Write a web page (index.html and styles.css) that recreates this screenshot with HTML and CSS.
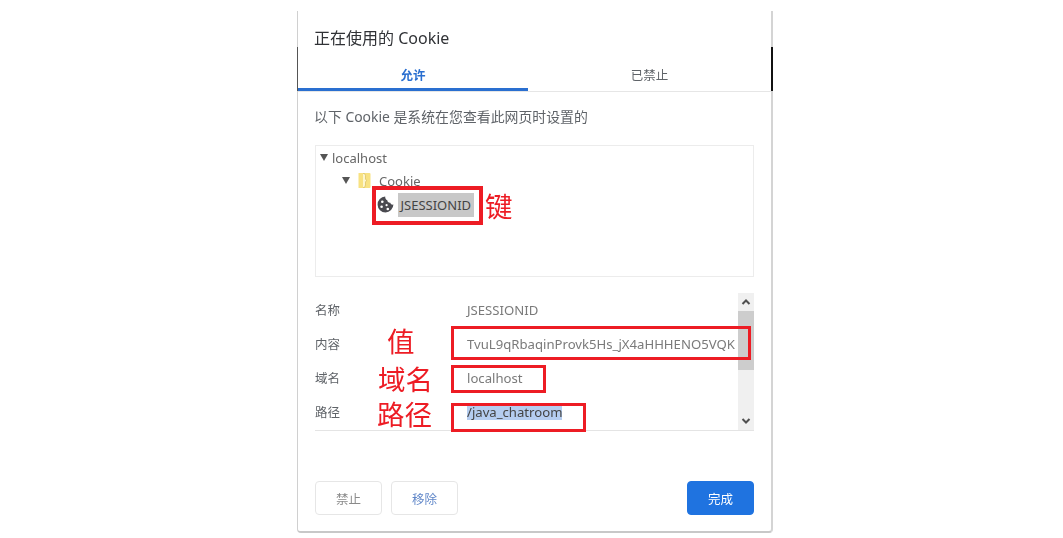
FILE: index.html
```html
<!DOCTYPE html>
<html lang="zh-CN">
<head>
    <meta charset="UTF-8">
    <title>正在使用的 Cookie</title>
    <link rel="stylesheet" href="styles.css">
</head>
<body>
    <div class="dialog">
        <div class="dialog-title">正在使用的 Cookie</div>
        <div class="tabs">
            <div class="tab active">允许</div>
            <div class="tab">已禁止</div>
        </div>
        <div class="dialog-body">
            <p class="desc">以下 Cookie 是系统在您查看此网页时设置的</p>
            <div class="tree">
                <div class="tree-row">
                    <span class="arrow"></span>
                    <span>localhost</span>
                </div>
                <div class="tree-row level-1">
                    <span class="arrow"></span>
                    <svg class="folder" width="14" height="17" viewBox="0 0 14 17">
                        <path d="M.5 1h11a1 1 0 0 1 1 1v13a1 1 0 0 1-1 1h-11z" fill="#f8e282"/>
                        <path d="M5 1.500h1.500l1 2v3.500l1 1.500-1 1.500v3l-1 2.500h-1.500" fill="#fdf6cf" stroke="#d9bf62" stroke-width="0.700"/>
                    </svg>
                    <span>Cookie</span>
                </div>
                <div class="tree-row level-2">
                    <svg class="cookie" width="17" height="17" viewBox="0 0 17 17">
                        <path d="M8.200.6a7.900 7.900 0 1 0 8.200 8c-1.500.3-2.800-.5-3.100-1.900-1.600.2-3-.9-3-2.500C8.900 4 8 2.300 8.200.6z" fill="#4a4a50"/>
                        <circle cx="5.300" cy="5.800" r="1.300" fill="#fff"/>
                        <circle cx="4.600" cy="10.800" r="1.300" fill="#fff"/>
                        <circle cx="9.600" cy="9.200" r="1.100" fill="#fff"/>
                        <circle cx="10.800" cy="13" r="1.300" fill="#fff"/>
                    </svg>
                    <span class="selected-node">JSESSIONID</span>
                </div>
            </div>
            <div class="details">
                <div class="detail-rows">
                    <div class="detail-row"><span class="detail-label">名称</span><span>JSESSIONID</span></div>
                    <div class="detail-row"><span class="detail-label">内容</span><span>TvuL9qRbaqinProvk5Hs_jX4aHHHENO5VQK</span></div>
                    <div class="detail-row"><span class="detail-label">域名</span><span>localhost</span></div>
                    <div class="detail-row"><span class="detail-label">路径</span><span class="selected-text">/java_chatroom</span></div>
                </div>
                <div class="scrollbar">
                    <svg width="16" height="18" viewBox="0 0 16 18"><path d="M4.500 11l3.500-3.500 3.500 3.500" fill="none" stroke="#505050" stroke-width="2"/></svg>
                    <div class="scroll-track"><div class="scroll-thumb"></div></div>
                    <svg width="16" height="18" viewBox="0 0 16 18"><path d="M4.500 7l3.500 3.500 3.500-3.500" fill="none" stroke="#505050" stroke-width="2"/></svg>
                </div>
            </div>
        </div>
        <div class="dialog-footer">
            <button class="btn">禁止</button>
            <button class="btn btn-link">移除</button>
            <button class="btn btn-primary">完成</button>
        </div>

        <!-- red notes drawn over the screenshot -->
        <div class="mark mark-key"></div>
        <div class="mark mark-value"></div>
        <div class="mark mark-domain"></div>
        <div class="mark mark-path"></div>
        <div class="note note-key">键</div>
        <div class="note note-value">值</div>
        <div class="note note-domain">域名</div>
        <div class="note note-path">路径</div>
    </div>
</body>
</html>
```

FILE: styles.css
```css
body {
    margin: 0;
    background: white;
    font-family: "Noto Sans", "Noto Sans CJK SC", sans-serif;
    color: #5f6368;
}
.dialog {
    position: relative;
    box-sizing: border-box;
    width: 476px;
    height: 522px;
    margin: 11px 0 0 297px;
    border-left: 1px solid #d0d0d0;
    border-right: 2px solid #d4d4d4;
    border-bottom: 2px solid #c8c8c8;
    border-radius: 0 0 4px 4px;
    display: flex;
    flex-direction: column;
    filter: blur(0.3px); /* the reference is a soft, scaled-up capture */
}
.dialog::before,
.dialog::after {
    content: "";
    position: absolute;
    top: 36px;
    height: 44px;
    width: 1px;
    background: #555;
}
.dialog::before {
    left: -1px;
}
.dialog::after {
    right: -2px;
    width: 2px;
    background: #111;
}
.dialog-title {
    padding: 15px 0 0 16px;
    height: 26px;
    font-size: 16px;
    line-height: 24px;
    color: #303236;
}
.tabs {
    display: flex;
    margin-top: 14px;
    height: 25px;
    border-bottom: 1px solid #e6e6e6;
}
.tab {
    flex: 1;
    font-size: 12.500px;
    line-height: 20px;
    text-align: center;
    color: #5f6368;
}
.tab.active {
    flex: none;
    width: 230px;
    height: 22px;
    color: #2a6fd0;
    font-weight: bold;
    border-bottom: 3px solid #2a6fd0;
}
.dialog-body {
    padding: 0 17px;
    flex: 1;
}
.desc {
    margin: 15px 0 0 -1px;
    font-size: 13.900px;
    line-height: 20px;
}
.tree {
    box-sizing: border-box;
    height: 132px;
    margin-top: 18px;
    border: 1px solid #ececec;
    font-size: 13px;
}
.tree-row {
    display: flex;
    align-items: center;
    height: 23px;
    padding-left: 4px;
    color: #666;
}
.level-1 {
    padding-left: 26px;
}
.level-2 {
    padding-left: 61px;
    margin-top: 1px;
}
.arrow {
    width: 0;
    height: 0;
    margin-right: 4px;
    border-left: 4.500px solid transparent;
    border-right: 4.500px solid transparent;
    border-top: 7px solid #555;
}
.folder {
    margin: 0 7px 0 4px;
}
.cookie {
    margin-right: 4px;
}
.selected-node {
    padding: 0 2.500px;
    line-height: 24px;
    background: #c8c8c8;
    color: #444;
}
.details {
    display: flex;
    height: 137px;
    margin-top: 16px;
    border-bottom: 1px solid #e4e4e4;
    font-size: 13.150px;
}
.detail-rows {
    flex: 1;
    overflow: hidden;
}
.detail-row {
    display: flex;
    align-items: center;
    height: 34px;
    color: #7a7a7a;
}
.detail-label {
    width: 152px;
    margin-top: -1px;
    font-size: 12.500px;
    color: #5f6368;
}
.selected-text {
    background: #b5cdf0;
    color: #444;
    line-height: 16px;
}
.scrollbar {
    width: 16px;
    display: flex;
    flex-direction: column;
    background: #f0f0f0;
}
.scroll-track {
    flex: 1;
}
.scroll-thumb {
    height: 59px;
    background: #cdcdcd;
}
.dialog-footer {
    display: flex;
    gap: 9px;
    padding: 0 17px 16px;
}
.btn {
    box-sizing: border-box;
    width: 67px;
    height: 34px;
    background: white;
    border: 1px solid #e6e6e6;
    border-radius: 4px;
    font-family: inherit;
    font-size: 12.500px;
    color: #8a8a8a;
}
.btn-link {
    color: #5f86c8;
}
.btn-primary {
    margin-left: auto;
    background: #1f73e0;
    border-color: #1f73e0;
    color: white;
}
.mark {
    position: absolute;
    box-sizing: border-box;
    border: 3px solid #ed1c24;
}
.mark-key {
    left: 74px;
    top: 175px;
    width: 111px;
    height: 39px;
    border-width: 4px;
}
.mark-value {
    left: 153px;
    top: 315px;
    width: 300px;
    height: 34px;
}
.mark-domain {
    left: 153px;
    top: 354px;
    width: 95px;
    height: 28px;
}
.mark-path {
    left: 153px;
    top: 392px;
    width: 135px;
    height: 29px;
}
.note {
    position: absolute;
    font-family: "Noto Sans CJK SC", sans-serif;
    font-size: 27.500px;
    line-height: 32px;
    color: #ed1c24;
}
.note-key {
    left: 187px;
    top: 178px;
}
.note-value {
    left: 89px;
    top: 313px;
}
.note-domain {
    left: 80px;
    top: 351px;
}
.note-path {
    left: 79px;
    top: 386px;
}
```
